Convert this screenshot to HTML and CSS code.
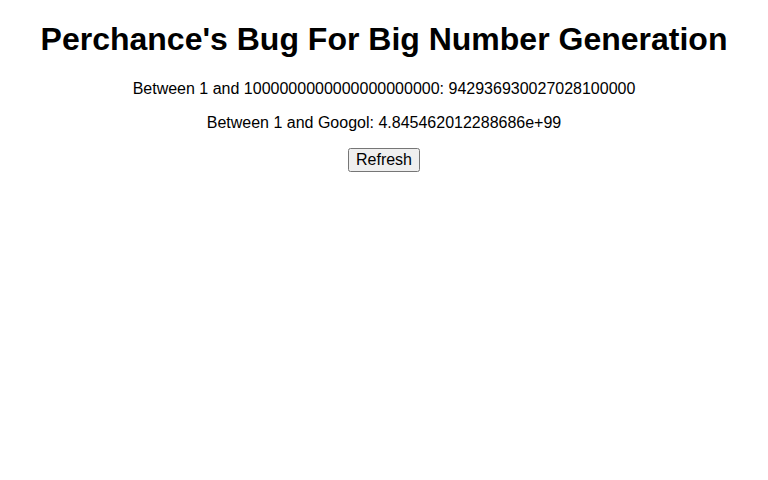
FILE: index.html
```html
<!DOCTYPE html>
<html>
<head>
<meta charset="utf-8">
<title>Perchance's Bug For Big Number Generation</title>
<link rel="stylesheet" href="styles.css">
</head>
<body>
<div class="page">
<h1 class="title">Perchance's Bug For Big Number Generation</h1>
<p class="line">Between 1 and 1000000000000000000000: 942936930027028100000</p>
<p class="line">Between 1 and Googol: 4.845462012288686e+99</p>
<button class="refresh">Refresh</button>
</div>
</body>
</html>
```
FILE: styles.css
```css
body {
  margin: 0;
  font-family: "Liberation Sans", Arial, sans-serif;
  color: #000;
  background: #fff;
}
.page {
  text-align: center;
}
.title {
  font-size: 32px;
  font-weight: bold;
  margin: 21.44px 0;
}
.line {
  font-size: 16px;
  margin: 16px 0;
}
.refresh {
  font-family: "Liberation Sans", Arial, sans-serif;
  font-size: 16px;
  padding: 1px 6px;
}
```
